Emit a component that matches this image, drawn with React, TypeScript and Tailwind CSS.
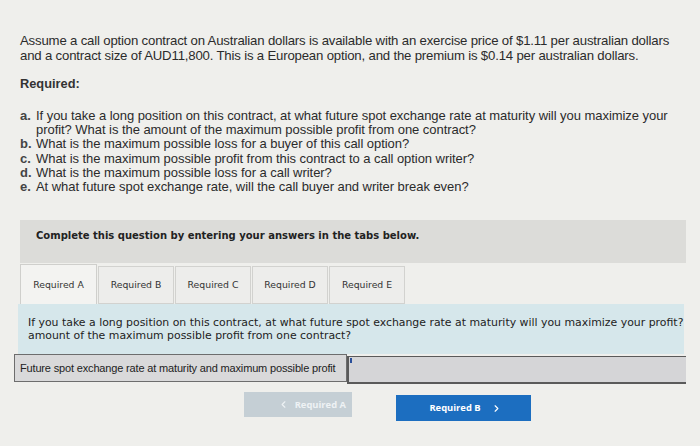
import { ChevronLeft, ChevronRight } from "lucide-react";

const parts = [
  {
    letter: "a.",
    lines: [
      "If you take a long position on this contract, at what future spot exchange rate at maturity will you maximize your",
      "profit? What is the amount of the maximum possible profit from one contract?",
    ],
  },
  { letter: "b.", lines: ["What is the maximum possible loss for a buyer of this call option?"] },
  { letter: "c.", lines: ["What is the maximum possible profit from this contract to a call option writer?"] },
  { letter: "d.", lines: ["What is the maximum possible loss for a call writer?"] },
  { letter: "e.", lines: ["At what future spot exchange rate, will the call buyer and writer break even?"] },
];

const tabs = ["Required A", "Required B", "Required C", "Required D", "Required E"];

export default function App() {
  return (
    <div className="w-[700px] h-[446px] overflow-hidden bg-[#efefec] text-[#2b2b2b]">
      <div className="w-[666px] ml-[20px] pt-[34px]" style={{ fontFamily: '"Liberation Sans", Arial, sans-serif' }}>
        <p className="text-[13.2px] leading-[14.5px] tracking-[-0.18px] whitespace-nowrap">
          Assume a call option contract on Australian dollars is available with an exercise price of $1.11 per australian dollars
          <br />
          and a contract size of AUD11,800. This is a European option, and the premium is $0.14 per australian dollars.
        </p>

        <p className="mt-[14px] text-[12.8px] leading-[14px] font-bold text-[#333]">Required:</p>

        <ol className="mt-[18px] text-[13px] leading-[14.2px] tracking-[-0.05px] whitespace-nowrap">
          {parts.map((p) => (
            <li key={p.letter} className="flex">
              <span className="w-[16px] shrink-0 font-bold text-[#444]">{p.letter}</span>
              <span>
                {p.lines.map((l) => (
                  <span key={l} className="block">
                    {l}
                  </span>
                ))}
              </span>
            </li>
          ))}
        </ol>
      </div>

      <div style={{ fontFamily: '"DejaVu Sans", Verdana, sans-serif' }}>
        <div className="mt-[26px] ml-[20px] w-[666px] h-[43px] bg-[#dcdcd9] pl-[16px] pt-[8px]">
          <p className="text-[10px] font-bold text-[#222]">Complete this question by entering your answers in the tabs below.</p>
        </div>

        <div className="ml-[20px] mt-[1px] flex items-end gap-[1px]">
          {tabs.map((t, i) => (
            <div
              key={t}
              className={
                i === 0
                  ? "w-[77px] h-[40px] bg-[#f3f3f1] border border-b-0 border-[#cfcfcc] flex items-center justify-center text-[9.3px] text-[#333]"
                  : "w-[76px] h-[38px] bg-[#ededeb] border border-[#d2d2cf] flex items-center justify-center text-[9.3px] text-[#333]"
              }
            >
              {t}
            </div>
          ))}
        </div>

        <div className="ml-[18px] w-[666px] h-[50px] bg-[#d6e7eb] pl-[10px] pt-[13px] overflow-hidden text-[10.9px] leading-[12.5px] text-[#222]">
          <p className="whitespace-nowrap">
            If you take a long position on this contract, at what future spot exchange rate at maturity will you maximize your profit? What is the
          </p>
          <p className="whitespace-nowrap">amount of the maximum possible profit from one contract?</p>
        </div>
      </div>

      <div className="ml-[14px] w-[672px] h-[29px] flex" style={{ fontFamily: '"Liberation Sans", Arial, sans-serif' }}>
        <div className="w-[333px] h-[28px] bg-[#d9d9da] border border-[#6d6d6d] flex items-center pl-[5px] text-[11px] tracking-[-0.16px] text-[#222] whitespace-nowrap">
          Future spot exchange rate at maturity and maximum possible profit
        </div>
        <div className="relative flex-1 mt-[2px] h-[28px] bg-[#d5d5d7] border-l-2 border-b-2 border-t border-[#5a5a5a]">
          <span className="absolute left-[1px] top-[1px] w-[2px] h-[5px] bg-[#2a4f9a]" />
        </div>
      </div>

      <div className="mt-[9px] flex items-start" style={{ fontFamily: '"Open Sans", Arial, sans-serif' }}>
        <div className="ml-[244px] w-[108px] h-[25px] bg-[#c5cfd5] flex items-center justify-end pr-[6px] gap-[6px] text-[9.4px] font-bold text-[#eef2f4]">
          <ChevronLeft className="w-[11px] h-[11px]" strokeWidth={2.5} />
          <span>Required A</span>
        </div>
        <div className="ml-[44px] mt-[3px] w-[135px] h-[26px] bg-[#1c6ec0] flex items-center justify-center gap-[10px] text-[9.4px] font-bold text-white">
          <span className="ml-[4px]">Required B</span>
          <ChevronRight className="w-[11px] h-[11px]" strokeWidth={2.5} />
        </div>
      </div>
    </div>
  );
}
